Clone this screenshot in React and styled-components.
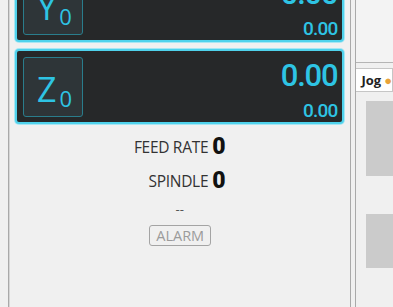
import styled, { createGlobalStyle } from "styled-components";

const GlobalStyle = createGlobalStyle`
  html, body {
    margin: 0;
    padding: 0;
    background: #f0f0f0;
    overflow: hidden;
  }
  body {
    font-family: "Open Sans", "Noto Sans", sans-serif;
  }
`;

const Page = styled.div`
  display: flex;
  height: 307px;
  padding-left: 8px;
  overflow: hidden;
`;

const LeftPanel = styled.div`
  width: 345px;
  border-left: 1px solid #a9a9a9;
  border-right: 1px solid #a9a9a9;
  box-shadow: inset 1px 0 0 #d6d6d6;
  background: #f0f0f0;
  padding: 0 6px;
  box-sizing: border-box;
  display: flex;
  flex-direction: column;
  margin-right: 4px;
`;

const Axes = styled.div`
  display: flex;
  flex-direction: column;
  gap: 7px;
  margin-top: -33px;
`;

const AxisRow = styled.div`
  height: 75px;
  box-sizing: border-box;
  background: #262829;
  border: 2px solid #4fd2ec;
  box-shadow: 0 0 0 1px #a8e6f3;
  border-radius: 4px;
  display: flex;
  align-items: flex-start;
  justify-content: space-between;
  padding: 6px 5px 0 6px;
`;

const AxisButton = styled.div`
  width: 60px;
  height: 60px;
  box-sizing: border-box;
  border: 1px solid #2a7d8c;
  border-radius: 3px;
  background: #2e3538;
  color: #2ec4e4;
  display: flex;
  align-items: center;
  justify-content: center;
  padding: 4px 0 0 3px;
`;

const Glyph = styled.span`
  font-family: "Open Sans", "Noto Sans", sans-serif;
  font-size: 34px;
  line-height: 1;
  white-space: nowrap;
  sub {
    font-size: 22px;
    line-height: 0;
    vertical-align: -5px;
    margin-left: 3px;
  }
`;

const Readout = styled.div`
  display: flex;
  flex-direction: column;
  align-items: flex-end;
  color: #2ec4e4;
  font-family: Roboto, "DejaVu Sans", sans-serif;
  font-weight: 500;
`;

const Value = styled.span`
  font-size: ${(p) => (p.$small ? "19px" : "31px")};
  line-height: ${(p) => (p.$small ? "22px" : "34px")};
  letter-spacing: ${(p) => (p.$small ? "-0.8px" : "-1.2px")};
  margin-top: ${(p) => (p.$small ? "7px" : "2px")};
`;

const Stats = styled.div`
  align-self: center;
  display: inline-grid;
  grid-template-columns: auto auto;
  column-gap: 4px;
  row-gap: 12px;
  align-items: center;
  margin-top: 12px;
`;

const Label = styled.span`
  justify-self: end;
  font-size: 15.5px;
  letter-spacing: -0.3px;
  color: #333;
`;

const Counter = styled.span`
  font-family: Roboto, "DejaVu Sans", sans-serif;
  font-weight: 900;
  font-size: 23px;
  line-height: 22px;
  color: #111;
`;

const Status = styled.div`
  align-self: center;
  margin-top: 9px;
  font-size: 13px;
  color: #555;
  line-height: 16px;
`;

const AlarmButton = styled.div`
  align-self: center;
  margin-top: 8px;
  margin-left: 1px;
  padding: 0 6px;
  height: 19px;
  line-height: 19px;
  border: 1px solid #a4a4a4;
  border-radius: 3px;
  font-size: 14.5px;
  color: #9b9b9b;
  background: #f0f0f0;
`;

const RightColumn = styled.div`
  flex: 1;
  display: flex;
  flex-direction: column;
  border-left: 1px solid #a9a9a9;
`;

const TopBox = styled.div`
  height: 62px;
  border-bottom: 1px solid #b5b5b5;
  background: #f3f3f3;
`;

const Tab = styled.div`
  margin-top: 5px;
  height: 22px;
  background: #fff;
  border: 1px solid #c6c6c6;
  border-left: none;
  display: flex;
  align-items: center;
  padding-left: 5px;
  font-size: 13px;
  font-weight: 700;
  color: #222;
  white-space: nowrap;
  span {
    color: #e8a33a;
    margin-left: 3px;
  }
`;

const JogArea = styled.div`
  display: flex;
  flex-direction: column;
  gap: 38px;
  padding: 9px 0 0 10px;
`;

const JogKey = styled.div`
  height: ${(p) => p.$h}px;
  background: #cbcbcb;
`;

function Axis({ name }) {
  return (
    <AxisRow>
      <AxisButton>
        <Glyph>
          {name}
          <sub>0</sub>
        </Glyph>
      </AxisButton>
      <Readout>
        <Value>0.00</Value>
        <Value $small>0.00</Value>
      </Readout>
    </AxisRow>
  );
}

export default function App() {
  return (
    <>
      <GlobalStyle />
      <Page>
        <LeftPanel>
          <Axes>
            <Axis name="Y" />
            <Axis name="Z" />
          </Axes>
          <Stats>
            <Label>FEED RATE</Label>
            <Counter>0</Counter>
            <Label>SPINDLE</Label>
            <Counter>0</Counter>
          </Stats>
          <Status>--</Status>
          <AlarmButton>ALARM</AlarmButton>
        </LeftPanel>
        <RightColumn>
          <TopBox />
          <Tab>
            Jog<span>●</span>
          </Tab>
          <JogArea>
            <JogKey $h={75} />
            <JogKey $h={54} />
          </JogArea>
        </RightColumn>
      </Page>
    </>
  );
}
